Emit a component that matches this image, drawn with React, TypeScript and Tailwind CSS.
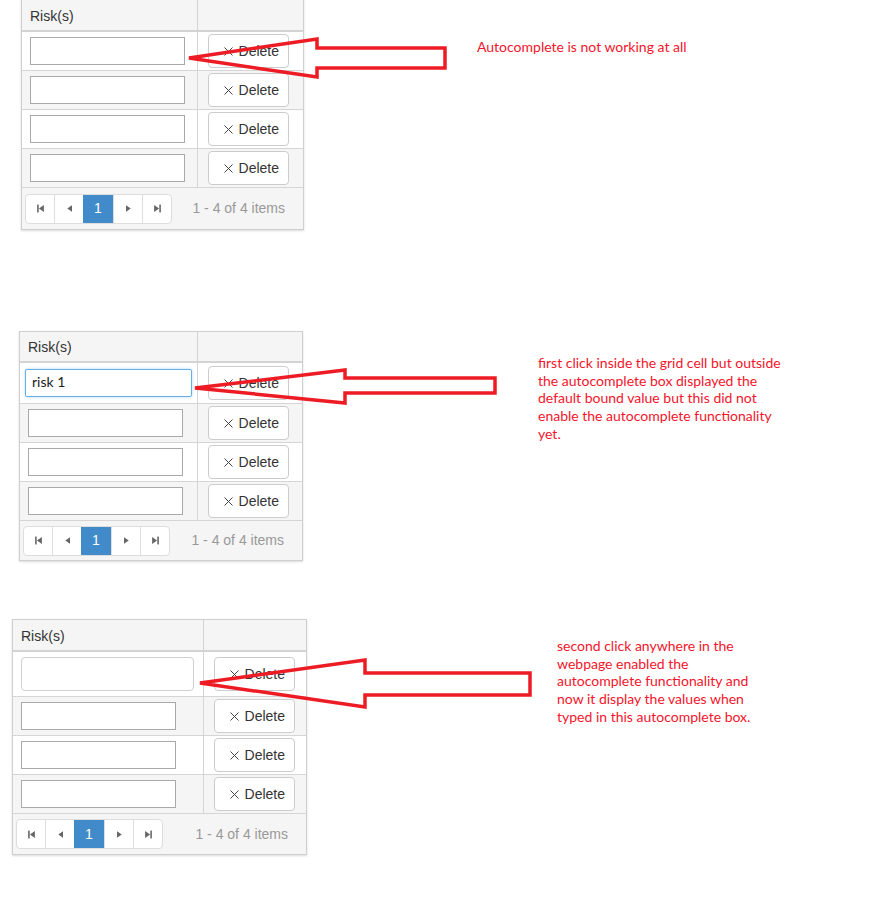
import React from "react"

type RowKind = "plain" | "focus" | "kendo"

interface GridProps {
  width: number
  col1: number
  headerH: number
  rowHeights: number[]
  firstRow: RowKind
  pagerH: number
}

function CloseIcon() {
  return (
    <svg width="11" height="11" viewBox="0 0 11 11" className="mr-[5px]">
      <path d="M1.5 1.5 L9.5 9.5 M9.5 1.5 L1.5 9.5" stroke="#444" strokeWidth="1" />
    </svg>
  )
}

function PagerIcon({ kind }: { kind: "first" | "prev" | "next" | "last" }) {
  return (
    <svg width="9" height="9" viewBox="0 0 8 8" fill="#666">
      {kind === "first" && (
        <>
          <rect x="1" y="0.5" width="1.4" height="7" />
          <path d="M7 0.8 L2.6 4 L7 7.2Z" />
        </>
      )}
      {kind === "prev" && <path d="M6.2 1.2 L2 4 L6.2 6.8Z" />}
      {kind === "next" && <path d="M1.8 1.2 L6 4 L1.8 6.8Z" />}
      {kind === "last" && (
        <>
          <path d="M1 0.8 L5.4 4 L1 7.2Z" />
          <rect x="5.6" y="0.5" width="1.4" height="7" />
        </>
      )}
    </svg>
  )
}

function RiskInput({ kind }: { kind: RowKind }) {
  if (kind === "focus") {
    return (
      <div className="ml-[-3px] w-[167px] h-[28px] border border-[#66afe9] rounded-[2px] bg-white flex items-center pl-[6px] pb-[3px] shadow-[0_0_3px_rgba(102,175,233,0.5)] text-[14px] text-[#222] font-['Lato',sans-serif]">
        risk 1
      </div>
    )
  }
  if (kind === "kendo") {
    return <div className="w-[173px] h-[34px] border border-[#d0d0d0] rounded-[4px] bg-white" />
  }
  return <div className="w-[155px] h-[28px] border border-[#a9a9a9] bg-white" />
}

function RiskGrid({ width, col1, headerH, rowHeights, firstRow, pagerH }: GridProps) {
  const cols = { gridTemplateColumns: `${col1}px 1fr` }
  return (
    <div
      className="border border-[#cfcfcf] bg-white shadow-[0_1px_2px_rgba(0,0,0,0.15)] text-[14px] text-[#333] font-['Liberation_Sans',Arial,sans-serif]"
      style={{ width }}
    >
      {/* Header */}
      <div className="grid bg-[#f5f5f5] border-b-2 border-[#d3d3d3]" style={{ ...cols, height: headerH }}>
        <div className="flex items-center pl-2 pt-[2px] border-r border-[#d3d3d3]">Risk(s)</div>
        <div />
      </div>

      {/* Rows */}
      {rowHeights.map((h, i) => (
        <div
          key={i}
          className={`grid border-b border-[#d5d5d5] ${i % 2 === 1 ? "bg-[#f5f5f5]" : "bg-white"}`}
          style={{ ...cols, height: h }}
        >
          <div className="flex items-center pl-2 border-r border-[#d5d5d5]">
            <RiskInput kind={i === 0 ? firstRow : "plain"} />
          </div>
          <div className="flex items-center pl-[10px]">
            <button className="w-[81px] h-[34px] border border-[#ccc] rounded-[4px] bg-white flex items-center justify-end pr-[9px] text-[#333]">
              <CloseIcon />
              Delete
            </button>
          </div>
        </div>
      ))}

      {/* Pager */}
      <div className="flex items-center justify-between bg-[#f5f5f5] pl-[3px] pr-[18px]" style={{ height: pagerH }}>
        <div className="flex h-[30px] border border-[#ddd] rounded-[4px] overflow-hidden bg-white">
          <div className="w-[28px] flex items-center justify-center">
            <PagerIcon kind="first" />
          </div>
          <div className="w-[29px] flex items-center justify-center border-l border-[#ddd]">
            <PagerIcon kind="prev" />
          </div>
          <div className="w-[30px] flex items-center justify-center bg-[#428bca] text-white">1</div>
          <div className="w-[29px] flex items-center justify-center border-l border-[#ddd]">
            <PagerIcon kind="next" />
          </div>
          <div className="w-[29px] flex items-center justify-center border-l border-[#ddd]">
            <PagerIcon kind="last" />
          </div>
        </div>
        <span className="text-[#999]">1 - 4 of 4 items</span>
      </div>
    </div>
  )
}

function Note({ lines }: { lines: string[] }) {
  return (
    <div className="text-[14px] leading-[17.7px] text-[#f5142b] font-['Lato',sans-serif]">
      {lines.map((l) => (
        <div key={l} className="whitespace-nowrap">
          {l}
        </div>
      ))}
    </div>
  )
}

export default function App() {
  return (
    <div className="relative w-[892px] h-[902px] bg-white overflow-hidden">
      {/* Case 1 */}
      <div className="flex items-start h-[331px]">
        <div className="ml-[21px] mt-[-1px]">
          <RiskGrid width={283} col1={176} headerH={32} rowHeights={[39, 39, 39, 39]} firstRow="plain" pagerH={41} />
        </div>
        <div className="ml-[173px] mt-[38px]">
          <Note lines={["Autocomplete is not working at all"]} />
        </div>
      </div>

      {/* Case 2 */}
      <div className="flex items-start h-[288px]">
        <div className="ml-[19px]">
          <RiskGrid width={284} col1={178} headerH={31} rowHeights={[41, 39, 39, 39]} firstRow="focus" pagerH={39} />
        </div>
        <div className="ml-[235px] mt-[23px]">
          <Note
            lines={[
              "first click inside the grid cell but outside",
              "the autocomplete box displayed the",
              "default bound value but this did not",
              "enable the autocomplete functionality",
              "yet.",
            ]}
          />
        </div>
      </div>

      {/* Case 3 */}
      <div className="flex items-start">
        <div className="ml-[12px]">
          <RiskGrid width={295} col1={191} headerH={32} rowHeights={[45, 39, 39, 39]} firstRow="kendo" pagerH={40} />
        </div>
        <div className="ml-[250px] mt-[18px]">
          <Note
            lines={[
              "second click anywhere in the",
              "webpage enabled the",
              "autocomplete functionality and",
              "now it display the values when",
              "typed in this autocomplete box.",
            ]}
          />
        </div>
      </div>

      {/* Hand-drawn arrows */}
      <svg className="absolute inset-0 pointer-events-none" width="892" height="902">
        <g fill="none" stroke="#ed1c24" strokeWidth="3.5" strokeLinejoin="miter">
          <polygon points="189,58 317,39 317,48 445,48 445,68 317,68 317,77" />
          <polygon points="195,388 345,370 345,378 495,378 495,393 345,393 345,403" />
          <polygon points="200,683 365,660 365,673 530,673 530,695 365,695 365,707" />
        </g>
      </svg>
    </div>
  )
}
